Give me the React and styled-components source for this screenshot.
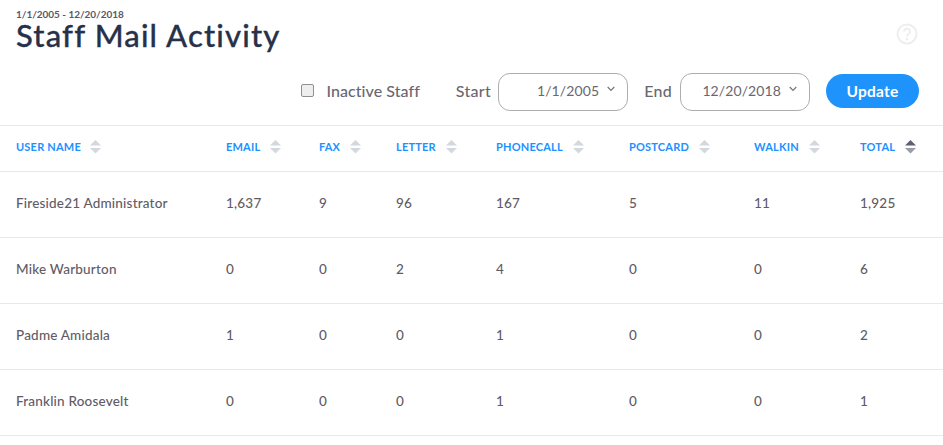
import React from "react";
import styled, { createGlobalStyle } from "styled-components";

const Global = createGlobalStyle`
  html, body { margin: 0; padding: 0; background: #fff; overflow: hidden; }
  body { font-family: Lato, "Open Sans", sans-serif; color: #5f5c66; }
`;
const Page = styled.div`width: 943px; height: 445px; overflow: hidden;`;
const Header = styled.header`
  display: flex; justify-content: space-between; align-items: flex-start;
  height: 59px; padding: 8px 24px 0 16px; box-sizing: border-box;
`;
const Titles = styled.div`display: flex; flex-direction: column;`;
const Range = styled.div`font-size: 10px; line-height: 12px; color: #5a5862; height: 11px; font-weight: 700; letter-spacing: -0.03px;`;
const Title = styled.h1`
  margin: 0; font-size: 31px; line-height: 32px; font-weight: 500; color: #27314a; letter-spacing: 1.15px;
  -webkit-text-stroke: 0.3px #27314a;
`;
const Help = styled.svg`width: 22px; height: 22px; margin-top: 15px; margin-right: 1px;`;
const Toolbar = styled.div`
  display: flex; align-items: center; justify-content: flex-end;
  height: 66px; padding: 0 24px 0 0; box-sizing: border-box;
`;
const Check = styled.span`
  width: 11px; height: 11px; border: 1px solid #8f8f8f; border-radius: 2px; background: #eeeeee;
  margin: 0 13px 4px 0;
`;
const Label = styled.span`
  font-size: 16px; color: #6a6770; letter-spacing: ${p => p.$tight ? 0.05 : 0.3}px; font-weight: 500;
  margin-right: ${p => p.$gap}px; padding-bottom: 3px;
`;
const DateBox = styled.div`
  width: 130px; height: 38px; box-sizing: border-box; border: 1px solid #adadad; border-radius: 12px;
  display: flex; align-items: center; justify-content: flex-end; padding: 0 12px 3px 0;
  font-size: 14px; color: #6a6770; letter-spacing: 0.1px; margin-right: ${p => p.$gap}px;
`;
const Chevron = styled.svg`width: 8px; height: 6px; margin: -4px 0 0 8px;`;
const Button = styled.button`
  width: 93px; height: 34px; border: 0; border-radius: 17px; background: #1e93fb; color: #fff;
  font: 700 15.5px Lato, sans-serif; letter-spacing: 0.2px; padding: 0; margin-bottom: 2px;
`;
const Table = styled.table`
  width: 943px; table-layout: fixed; border-collapse: collapse; border-top: 1px solid #e8e8e8;
`;
const Th = styled.th`
  height: 41px; padding: 0 0 4px ${p => p.$first ? 16 : 0}px; text-align: left;
  border-bottom: 1px solid #e8e8e8; font-size: 11px; font-weight: 700; color: #1e90ff; letter-spacing: 0.2px;
  white-space: nowrap;
`;
const Td = styled.td`
  height: 61px; padding: 0 0 4px ${p => p.$first ? 16 : 0}px; border-bottom: 1px solid #e8e8e8;
  font-size: 13.5px; font-weight: 500; color: #5f5c66; letter-spacing: 0.2px; white-space: nowrap;
`;
const HeadInner = styled.span`display: inline-flex; align-items: center; gap: ${p => p.$gap}px;`;
const Sort = styled.svg`width: 11px; height: 15px; flex: none;`;

const columns = [
  { name: "USER NAME", width: 226, gap: 9 },
  { name: "EMAIL", width: 93, gap: 10 },
  { name: "FAX", width: 77, gap: 10 },
  { name: "LETTER", width: 100, gap: 10 },
  { name: "PHONECALL", width: 133, gap: 10 },
  { name: "POSTCARD", width: 125, gap: 10 },
  { name: "WALKIN", width: 106, gap: 10 },
  { name: "TOTAL", width: 83, gap: 10, active: true },
];
const rows = [
  ["Fireside21 Administrator", "1,637", "9", "96", "167", "5", "11", "1,925"],
  ["Mike Warburton", "0", "0", "2", "4", "0", "0", "6"],
  ["Padme Amidala", "1", "0", "0", "1", "0", "0", "2"],
  ["Franklin Roosevelt", "0", "0", "0", "1", "0", "0", "1"],
];

const SortIcon = ({ active }) => (
  <Sort viewBox="0 0 11 15">
    <path d="M5.5 1 L11 6.5 H0 Z" fill={active ? "#5c6070" : "#d3d7de"} />
    <path d="M5.5 14.5 L11 9 H0 Z" fill={active ? "#9a9ca6" : "#d3d7de"} />
  </Sort>
);

const DateChevron = () => (
  <Chevron viewBox="0 0 8 6" fill="none"><path d="M.7 1 L4 4.4 L7.3 1" stroke="#77747c" strokeWidth="1.2" /></Chevron>
);

export default function App() {
  return (
    <Page>
      <Global />
      <Header>
        <Titles>
          <Range>1/1/2005 - 12/20/2018</Range>
          <Title>Staff Mail Activity</Title>
        </Titles>
        <Help viewBox="0 0 22 22" fill="none">
          <circle cx="11" cy="11" r="9.5" stroke="#eeeeee" strokeWidth="2" />
          <path d="M8 8.6 a3 3 0 1 1 4.8 2.4 c-1.2.8-1.8 1.3-1.8 2.6" stroke="#eeeeee" strokeWidth="2" />
          <circle cx="11" cy="16.3" r="1.2" fill="#eeeeee" />
        </Help>
      </Header>
      <Toolbar>
        <Check />
        <Label $gap={36} $tight>Inactive Staff</Label>
        <Label $gap={7}>Start</Label>
        <DateBox $gap={16}>
          1/1/2005
          <DateChevron />
        </DateBox>
        <Label $gap={8}>End</Label>
        <DateBox $gap={16}>
          12/20/2018
          <DateChevron />
        </DateBox>
        <Button>Update</Button>
      </Toolbar>
      <Table>
        <colgroup>
          {columns.map(c => <col key={c.name} width={c.width} />)}
        </colgroup>
        <thead>
          <tr>
            {columns.map((c, i) => (
              <Th key={c.name} $first={i === 0}>
                <HeadInner $gap={c.gap}>{c.name}<SortIcon active={c.active} /></HeadInner>
              </Th>
            ))}
          </tr>
        </thead>
        <tbody>
          {rows.map(r => (
            <tr key={r[0]}>
              {r.map((v, i) => <Td key={i} $first={i === 0}>{v}</Td>)}
            </tr>
          ))}
        </tbody>
      </Table>
    </Page>
  );
}
